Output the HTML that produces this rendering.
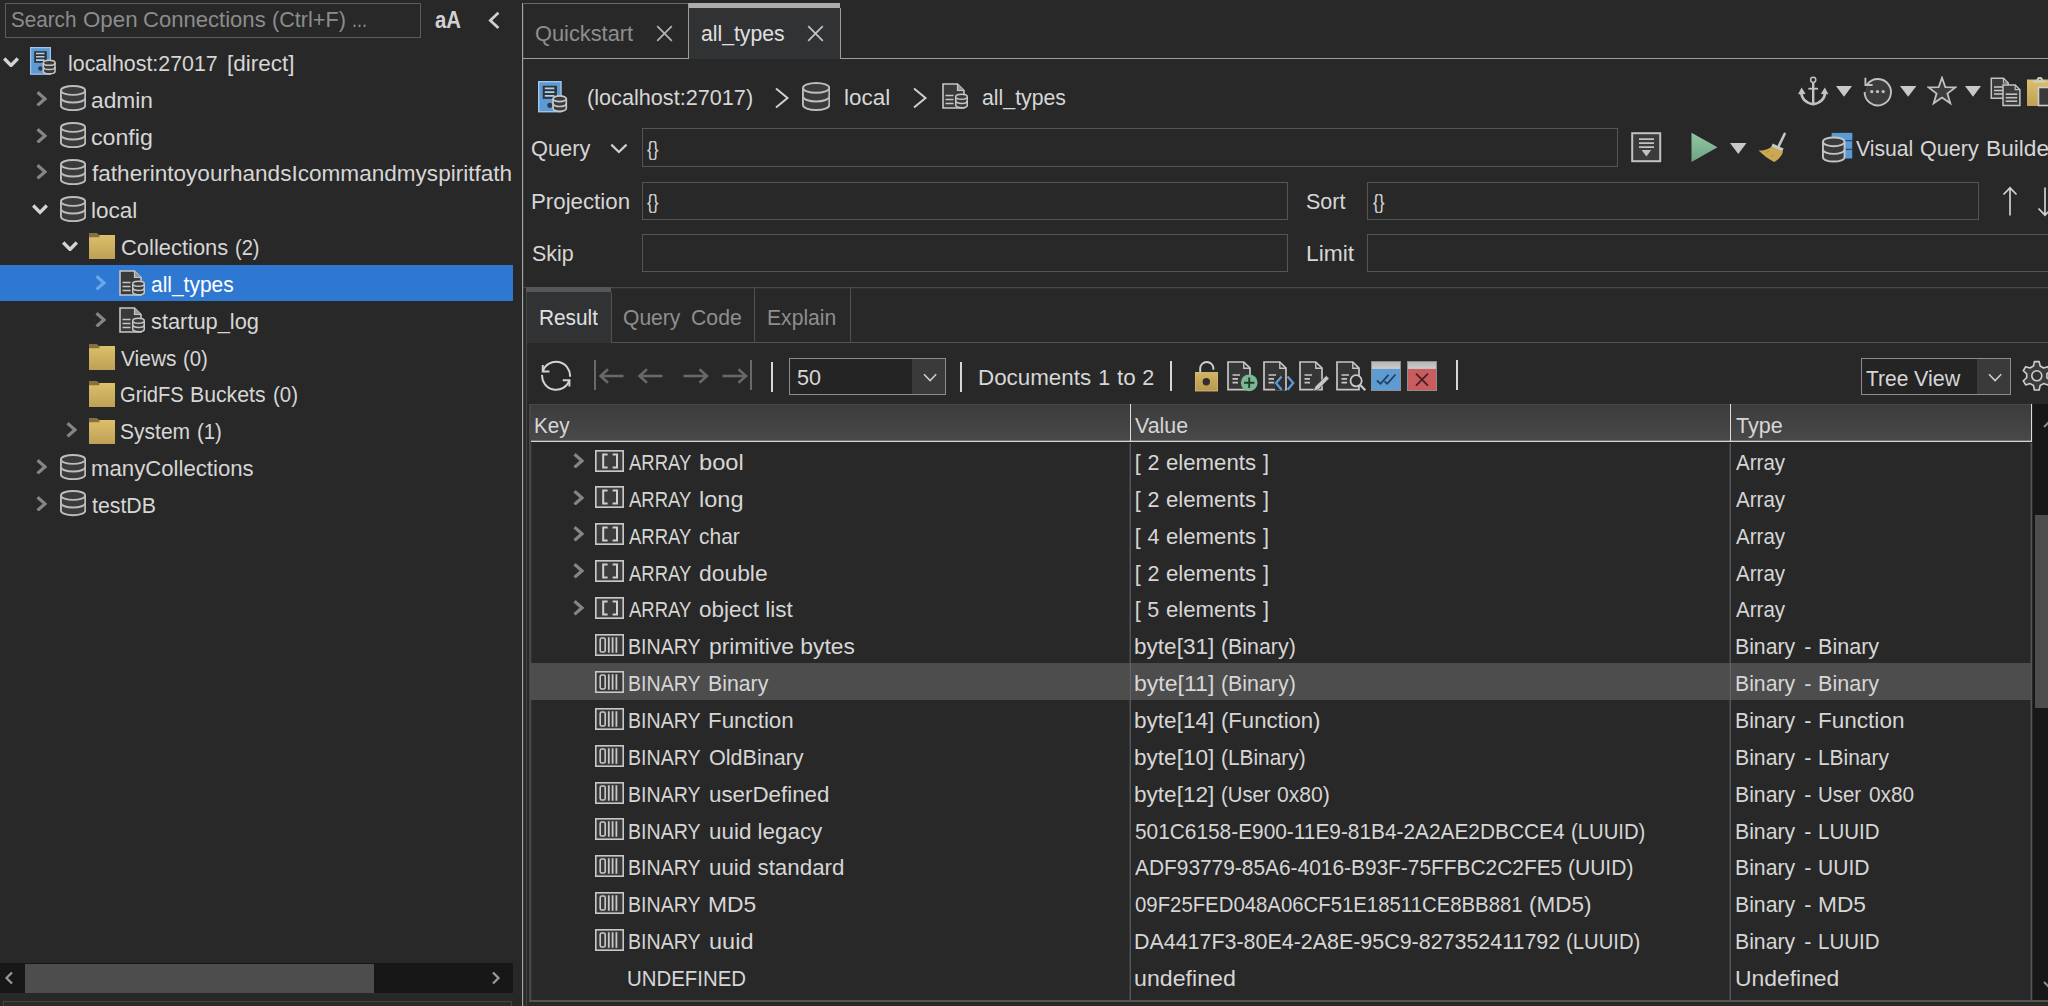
<!DOCTYPE html>
<html><head><meta charset="utf-8"><title>all_types</title>
<style>
html,body{margin:0;padding:0;background:#282828;}
body{width:2048px;height:1006px;overflow:hidden;position:relative;font-family:"Liberation Sans",sans-serif;font-size:21.5px;color:#d6d6d6;}
.a{position:absolute;box-sizing:border-box;display:block;}
.t{position:absolute;left:0;white-space:pre;line-height:28px;height:28px;}
.w{position:absolute;top:0;white-space:pre;transform-origin:0 0;}
</style></head>
<body>
<div class="a" style="left:5px;top:3px;width:416px;height:35px;border:1px solid #5c5c5c;"></div>
<svg class="a" style="left:486.5px;top:11.4px" width="14" height="19" viewBox="0 0 14 19"><path d="M11.4 1.8 L3.3 9.4 L11.4 17" fill="none" stroke="#d2d2d2" stroke-width="2.7"/></svg>
<svg class="a" style="left:3px;top:56.7px" width="16" height="10.5" viewBox="0 0 16 10.5"><path d="M1.2 1.5 L8.0 8.5 L14.8 1.5" fill="none" stroke="#d4d4d4" stroke-width="3.3"/></svg>
<svg class="a" style="left:30px;top:47.0px" width="27" height="29" viewBox="0 0 27 29"><rect x="0.6" y="0.6" width="19.8" height="26.6" fill="#5b9ad5" stroke="#a3c8ec" stroke-width="1.2"/><rect x="4.2" y="4.2" width="12.6" height="11.6" fill="#333"/><path d="M6 6.5 H14.5 M6 9.8 H14.5 M6 13.1 H14.5" stroke="#a9d1f5" stroke-width="1.6"/><circle cx="10.5" cy="21.5" r="2.3" fill="#2f3b48"/><g transform="translate(12.6 12.4)"><path d="M0.75 3.334 V11.866 A5.85 2.584 0 0 0 12.45 11.866 V3.334" fill="#3a3a3a" stroke="#c8c8c8" stroke-width="1.5"/><ellipse cx="6.6" cy="3.334" rx="5.85" ry="2.584" fill="#3a3a3a" stroke="#c8c8c8" stroke-width="1.5"/><path d="M0.75 7.6 A5.85 2.584 0 0 0 12.45 7.6" fill="none" stroke="#c8c8c8" stroke-width="1.5"/></g></svg>
<svg class="a" style="left:36px;top:90.6px" width="11" height="15.6" viewBox="0 0 11 15.6"><path d="M1.5 1.2 L9 7.8 L1.5 14.4" fill="none" stroke="#858585" stroke-width="3.2"/></svg>
<svg class="a" style="left:59.7px;top:85.2px" width="26.2" height="26.2" viewBox="0 0 26.2 26.2"><path d="M0.9499999999999993 5.404000000000001 V20.796 A12.15 4.454000000000001 0 0 0 25.25 20.796 V5.404000000000001" fill="#3b3b3b" stroke="#bdbdbd" stroke-width="1.9"/><ellipse cx="13.1" cy="5.404000000000001" rx="12.15" ry="4.454000000000001" fill="#3b3b3b" stroke="#bdbdbd" stroke-width="1.9"/><path d="M0.9499999999999993 13.100000000000001 A12.15 4.454000000000001 0 0 0 25.25 13.100000000000001" fill="none" stroke="#bdbdbd" stroke-width="1.9"/></svg>
<svg class="a" style="left:36px;top:127.5px" width="11" height="15.6" viewBox="0 0 11 15.6"><path d="M1.5 1.2 L9 7.8 L1.5 14.4" fill="none" stroke="#858585" stroke-width="3.2"/></svg>
<svg class="a" style="left:59.7px;top:122.1px" width="26.2" height="26.2" viewBox="0 0 26.2 26.2"><path d="M0.9499999999999993 5.404000000000001 V20.796 A12.15 4.454000000000001 0 0 0 25.25 20.796 V5.404000000000001" fill="#3b3b3b" stroke="#bdbdbd" stroke-width="1.9"/><ellipse cx="13.1" cy="5.404000000000001" rx="12.15" ry="4.454000000000001" fill="#3b3b3b" stroke="#bdbdbd" stroke-width="1.9"/><path d="M0.9499999999999993 13.100000000000001 A12.15 4.454000000000001 0 0 0 25.25 13.100000000000001" fill="none" stroke="#bdbdbd" stroke-width="1.9"/></svg>
<svg class="a" style="left:36px;top:164.3px" width="11" height="15.6" viewBox="0 0 11 15.6"><path d="M1.5 1.2 L9 7.8 L1.5 14.4" fill="none" stroke="#858585" stroke-width="3.2"/></svg>
<svg class="a" style="left:59.7px;top:158.9px" width="26.2" height="26.2" viewBox="0 0 26.2 26.2"><path d="M0.9499999999999993 5.404000000000001 V20.796 A12.15 4.454000000000001 0 0 0 25.25 20.796 V5.404000000000001" fill="#3b3b3b" stroke="#bdbdbd" stroke-width="1.9"/><ellipse cx="13.1" cy="5.404000000000001" rx="12.15" ry="4.454000000000001" fill="#3b3b3b" stroke="#bdbdbd" stroke-width="1.9"/><path d="M0.9499999999999993 13.100000000000001 A12.15 4.454000000000001 0 0 0 25.25 13.100000000000001" fill="none" stroke="#bdbdbd" stroke-width="1.9"/></svg>
<svg class="a" style="left:32px;top:204.0px" width="16" height="10.5" viewBox="0 0 16 10.5"><path d="M1.2 1.5 L8.0 8.5 L14.8 1.5" fill="none" stroke="#d4d4d4" stroke-width="3.3"/></svg>
<svg class="a" style="left:59.7px;top:195.7px" width="26.2" height="26.2" viewBox="0 0 26.2 26.2"><path d="M0.9499999999999993 5.404000000000001 V20.796 A12.15 4.454000000000001 0 0 0 25.25 20.796 V5.404000000000001" fill="#3b3b3b" stroke="#bdbdbd" stroke-width="1.9"/><ellipse cx="13.1" cy="5.404000000000001" rx="12.15" ry="4.454000000000001" fill="#3b3b3b" stroke="#bdbdbd" stroke-width="1.9"/><path d="M0.9499999999999993 13.100000000000001 A12.15 4.454000000000001 0 0 0 25.25 13.100000000000001" fill="none" stroke="#bdbdbd" stroke-width="1.9"/></svg>
<svg class="a" style="left:62px;top:240.8px" width="16" height="10.5" viewBox="0 0 16 10.5"><path d="M1.2 1.5 L8.0 8.5 L14.8 1.5" fill="none" stroke="#d4d4d4" stroke-width="3.3"/></svg>
<svg class="a" style="left:89px;top:233.3px" width="26" height="26" viewBox="0 0 26 26"><defs><linearGradient id="fg" x1="0" y1="0" x2="0" y2="1"><stop offset="0" stop-color="#dcc06a"/><stop offset="1" stop-color="#bea056"/></linearGradient></defs><rect x="0" y="2" width="26" height="24" fill="url(#fg)"/><path d="M0 0 H7.6 L10.4 2 V4.3 H0 Z" fill="#87703f"/></svg>
<div class="a" style="left:0px;top:264.5px;width:513px;height:36.3px;background:#2f78d2;"></div>
<svg class="a" style="left:95px;top:274.8px" width="11" height="15.6" viewBox="0 0 11 15.6"><path d="M1.5 1.2 L9 7.8 L1.5 14.4" fill="none" stroke="#6ba6ea" stroke-width="3.2"/></svg>
<svg class="a" style="left:118.5px;top:270.0px" width="27" height="27" viewBox="0 0 27 27"><path d="M1 1 H15.5 L22 7.5 V25 H1 Z" fill="#3a3a3a" stroke="#c6c6c6" stroke-width="1.6"/><path d="M15.5 1 V7.5 H22" fill="#9a9a9a" stroke="#c6c6c6" stroke-width="1.2"/><path d="M3.5 12.5 H11.5 M3.5 16.5 H11.5 M3.5 20.5 H11.5" stroke="#c6c6c6" stroke-width="1.7"/><g transform="translate(13 10.5)"><path d="M0.75 3.3000000000000003 V11.7 A5.75 2.5500000000000003 0 0 0 12.25 11.7 V3.3000000000000003" fill="#3a3a3a" stroke="#c6c6c6" stroke-width="1.5"/><ellipse cx="6.5" cy="3.3000000000000003" rx="5.75" ry="2.5500000000000003" fill="#3a3a3a" stroke="#c6c6c6" stroke-width="1.5"/><path d="M0.75 7.5 A5.75 2.5500000000000003 0 0 0 12.25 7.5" fill="none" stroke="#c6c6c6" stroke-width="1.5"/></g></svg>
<svg class="a" style="left:95px;top:311.6px" width="11" height="15.6" viewBox="0 0 11 15.6"><path d="M1.5 1.2 L9 7.8 L1.5 14.4" fill="none" stroke="#858585" stroke-width="3.2"/></svg>
<svg class="a" style="left:118.5px;top:306.8px" width="27" height="27" viewBox="0 0 27 27"><path d="M1 1 H15.5 L22 7.5 V25 H1 Z" fill="#3a3a3a" stroke="#c6c6c6" stroke-width="1.6"/><path d="M15.5 1 V7.5 H22" fill="#9a9a9a" stroke="#c6c6c6" stroke-width="1.2"/><path d="M3.5 12.5 H11.5 M3.5 16.5 H11.5 M3.5 20.5 H11.5" stroke="#c6c6c6" stroke-width="1.7"/><g transform="translate(13 10.5)"><path d="M0.75 3.3000000000000003 V11.7 A5.75 2.5500000000000003 0 0 0 12.25 11.7 V3.3000000000000003" fill="#3a3a3a" stroke="#c6c6c6" stroke-width="1.5"/><ellipse cx="6.5" cy="3.3000000000000003" rx="5.75" ry="2.5500000000000003" fill="#3a3a3a" stroke="#c6c6c6" stroke-width="1.5"/><path d="M0.75 7.5 A5.75 2.5500000000000003 0 0 0 12.25 7.5" fill="none" stroke="#c6c6c6" stroke-width="1.5"/></g></svg>
<svg class="a" style="left:89px;top:343.8px" width="26" height="26" viewBox="0 0 26 26"><defs><linearGradient id="fg" x1="0" y1="0" x2="0" y2="1"><stop offset="0" stop-color="#dcc06a"/><stop offset="1" stop-color="#bea056"/></linearGradient></defs><rect x="0" y="2" width="26" height="24" fill="url(#fg)"/><path d="M0 0 H7.6 L10.4 2 V4.3 H0 Z" fill="#87703f"/></svg>
<svg class="a" style="left:89px;top:380.7px" width="26" height="26" viewBox="0 0 26 26"><defs><linearGradient id="fg" x1="0" y1="0" x2="0" y2="1"><stop offset="0" stop-color="#dcc06a"/><stop offset="1" stop-color="#bea056"/></linearGradient></defs><rect x="0" y="2" width="26" height="24" fill="url(#fg)"/><path d="M0 0 H7.6 L10.4 2 V4.3 H0 Z" fill="#87703f"/></svg>
<svg class="a" style="left:66px;top:422.1px" width="11" height="15.6" viewBox="0 0 11 15.6"><path d="M1.5 1.2 L9 7.8 L1.5 14.4" fill="none" stroke="#858585" stroke-width="3.2"/></svg>
<svg class="a" style="left:89px;top:417.5px" width="26" height="26" viewBox="0 0 26 26"><defs><linearGradient id="fg" x1="0" y1="0" x2="0" y2="1"><stop offset="0" stop-color="#dcc06a"/><stop offset="1" stop-color="#bea056"/></linearGradient></defs><rect x="0" y="2" width="26" height="24" fill="url(#fg)"/><path d="M0 0 H7.6 L10.4 2 V4.3 H0 Z" fill="#87703f"/></svg>
<svg class="a" style="left:36px;top:458.9px" width="11" height="15.6" viewBox="0 0 11 15.6"><path d="M1.5 1.2 L9 7.8 L1.5 14.4" fill="none" stroke="#858585" stroke-width="3.2"/></svg>
<svg class="a" style="left:59.7px;top:453.5px" width="26.2" height="26.2" viewBox="0 0 26.2 26.2"><path d="M0.9499999999999993 5.404000000000001 V20.796 A12.15 4.454000000000001 0 0 0 25.25 20.796 V5.404000000000001" fill="#3b3b3b" stroke="#bdbdbd" stroke-width="1.9"/><ellipse cx="13.1" cy="5.404000000000001" rx="12.15" ry="4.454000000000001" fill="#3b3b3b" stroke="#bdbdbd" stroke-width="1.9"/><path d="M0.9499999999999993 13.100000000000001 A12.15 4.454000000000001 0 0 0 25.25 13.100000000000001" fill="none" stroke="#bdbdbd" stroke-width="1.9"/></svg>
<svg class="a" style="left:36px;top:495.8px" width="11" height="15.6" viewBox="0 0 11 15.6"><path d="M1.5 1.2 L9 7.8 L1.5 14.4" fill="none" stroke="#858585" stroke-width="3.2"/></svg>
<svg class="a" style="left:59.7px;top:490.4px" width="26.2" height="26.2" viewBox="0 0 26.2 26.2"><path d="M0.9499999999999993 5.404000000000001 V20.796 A12.15 4.454000000000001 0 0 0 25.25 20.796 V5.404000000000001" fill="#3b3b3b" stroke="#bdbdbd" stroke-width="1.9"/><ellipse cx="13.1" cy="5.404000000000001" rx="12.15" ry="4.454000000000001" fill="#3b3b3b" stroke="#bdbdbd" stroke-width="1.9"/><path d="M0.9499999999999993 13.100000000000001 A12.15 4.454000000000001 0 0 0 25.25 13.100000000000001" fill="none" stroke="#bdbdbd" stroke-width="1.9"/></svg>
<div class="a" style="left:0px;top:963px;width:513px;height:30px;background:#171717;"></div>
<div class="a" style="left:25px;top:964px;width:349px;height:29px;background:#4d4d4d;"></div>
<svg class="a" style="left:4px;top:971px" width="10" height="14" viewBox="0 0 10 14"><path d="M8 1.5 L2.5 7 L8 12.5" fill="none" stroke="#9a9a9a" stroke-width="2.2"/></svg>
<svg class="a" style="left:491px;top:971px" width="10" height="14" viewBox="0 0 10 14"><path d="M2 1.5 L7.5 7 L2 12.5" fill="none" stroke="#9a9a9a" stroke-width="2.2"/></svg>
<div class="a" style="left:3px;top:1001px;width:509px;height:6px;background:#2b2b2b;border:1px solid #444;"></div>
<div class="a" style="left:522px;top:3px;width:167px;height:1px;background:#6a6a6a;"></div>
<div class="a" style="left:522px;top:3px;width:1px;height:1003px;background:#a2a2a2;"></div>
<div class="a" style="left:523px;top:3px;width:1px;height:1003px;background:#3c3c3c;"></div>
<div class="a" style="left:522px;top:58px;width:1526px;height:1px;background:#9c9c9c;"></div>
<div class="a" style="left:688px;top:3px;width:1px;height:56px;background:#9c9c9c;"></div>
<div class="a" style="left:689px;top:3px;width:151px;height:56px;background:#313234;"></div>
<div class="a" style="left:689px;top:3px;width:151px;height:5px;background:#adadad;"></div>
<div class="a" style="left:840px;top:8px;width:1px;height:51px;background:#9c9c9c;"></div>
<svg class="a" style="left:655.8px;top:24.799999999999997px" width="17" height="17" viewBox="0 0 17 17"><path d="M1.2 1.2 L15.8 15.8 M15.8 1.2 L1.2 15.8" stroke="#b4b4b4" stroke-width="1.7"/></svg>
<svg class="a" style="left:806.8px;top:24.799999999999997px" width="17" height="17" viewBox="0 0 17 17"><path d="M1.2 1.2 L15.8 15.8 M15.8 1.2 L1.2 15.8" stroke="#c4c4c4" stroke-width="1.7"/></svg>
<svg class="a" style="left:538px;top:80.5px" width="30.51" height="32.77" viewBox="0 0 27 29"><rect x="0.6" y="0.6" width="19.8" height="26.6" fill="#5b9ad5" stroke="#a3c8ec" stroke-width="1.2"/><rect x="4.2" y="4.2" width="12.6" height="11.6" fill="#333"/><path d="M6 6.5 H14.5 M6 9.8 H14.5 M6 13.1 H14.5" stroke="#a9d1f5" stroke-width="1.6"/><circle cx="10.5" cy="21.5" r="2.3" fill="#2f3b48"/><g transform="translate(12.6 12.4)"><path d="M0.75 3.334 V11.866 A5.85 2.584 0 0 0 12.45 11.866 V3.334" fill="#3a3a3a" stroke="#c8c8c8" stroke-width="1.5"/><ellipse cx="6.6" cy="3.334" rx="5.85" ry="2.584" fill="#3a3a3a" stroke="#c8c8c8" stroke-width="1.5"/><path d="M0.75 7.6 A5.85 2.584 0 0 0 12.45 7.6" fill="none" stroke="#c8c8c8" stroke-width="1.5"/></g></svg>
<svg class="a" style="left:774px;top:87px" width="16" height="22" viewBox="0 0 16 22"><path d="M2 1.5 L13.5 11 L2 20.5" fill="none" stroke="#d0d0d0" stroke-width="2"/></svg>
<svg class="a" style="left:802px;top:82px" width="28.3" height="29" viewBox="0 0 28.3 29"><path d="M0.9499999999999993 5.880000000000001 V23.12 A13.200000000000001 4.930000000000001 0 0 0 27.35 23.12 V5.880000000000001" fill="#3b3b3b" stroke="#bdbdbd" stroke-width="1.9"/><ellipse cx="14.15" cy="5.880000000000001" rx="13.200000000000001" ry="4.930000000000001" fill="#3b3b3b" stroke="#bdbdbd" stroke-width="1.9"/><path d="M0.9499999999999993 14.500000000000002 A13.200000000000001 4.930000000000001 0 0 0 27.35 14.500000000000002" fill="none" stroke="#bdbdbd" stroke-width="1.9"/></svg>
<svg class="a" style="left:912px;top:87px" width="16" height="22" viewBox="0 0 16 22"><path d="M2 1.5 L13.5 11 L2 20.5" fill="none" stroke="#d0d0d0" stroke-width="2"/></svg>
<svg class="a" style="left:942px;top:83px" width="27" height="27" viewBox="0 0 27 27"><path d="M1 1 H15.5 L22 7.5 V25 H1 Z" fill="#3a3a3a" stroke="#c6c6c6" stroke-width="1.6"/><path d="M15.5 1 V7.5 H22" fill="#9a9a9a" stroke="#c6c6c6" stroke-width="1.2"/><path d="M3.5 12.5 H11.5 M3.5 16.5 H11.5 M3.5 20.5 H11.5" stroke="#c6c6c6" stroke-width="1.7"/><g transform="translate(13 10.5)"><path d="M0.75 3.3000000000000003 V11.7 A5.75 2.5500000000000003 0 0 0 12.25 11.7 V3.3000000000000003" fill="#3a3a3a" stroke="#c6c6c6" stroke-width="1.5"/><ellipse cx="6.5" cy="3.3000000000000003" rx="5.75" ry="2.5500000000000003" fill="#3a3a3a" stroke="#c6c6c6" stroke-width="1.5"/><path d="M0.75 7.5 A5.75 2.5500000000000003 0 0 0 12.25 7.5" fill="none" stroke="#c6c6c6" stroke-width="1.5"/></g></svg>
<svg class="a" style="left:610px;top:142.6px" width="18" height="11" viewBox="0 0 18 11"><path d="M1.3 1.6 L8.9 9 L16.5 1.6" fill="none" stroke="#cfcfcf" stroke-width="2.2"/></svg>
<div class="a" style="left:642px;top:128px;width:976px;height:38.5px;border:1px solid #555;"></div>
<div class="a" style="left:642px;top:181.5px;width:646px;height:38.5px;border:1px solid #555;"></div>
<div class="a" style="left:1367px;top:181.5px;width:612px;height:38.5px;border:1px solid #555;"></div>
<div class="a" style="left:642px;top:233.5px;width:646px;height:38.5px;border:1px solid #555;"></div>
<div class="a" style="left:1367px;top:233.5px;width:700px;height:38.5px;border:1px solid #555;"></div>
<div class="a" style="left:523px;top:287px;width:1525px;height:1px;background:#484848;"></div>
<div class="a" style="left:611px;top:288px;width:1437px;height:1px;background:#303030;"></div>
<div class="a" style="left:526px;top:287px;width:85px;height:56px;background:#303234;"></div>
<div class="a" style="left:526px;top:287px;width:85px;height:5px;background:#575757;"></div>
<div class="a" style="left:526px;top:292px;width:1px;height:714px;background:#454545;"></div>
<div class="a" style="left:611px;top:292px;width:1px;height:51px;background:#505050;"></div>
<div class="a" style="left:754px;top:287px;width:1px;height:55px;background:#505050;"></div>
<div class="a" style="left:850px;top:287px;width:1px;height:55px;background:#505050;"></div>
<div class="a" style="left:611px;top:342px;width:1437px;height:1px;background:#505050;"></div>
<svg class="a" style="left:540px;top:360px" width="33" height="33" viewBox="0 0 33 33"><path d="M2.79 11.47 A14.0 14.0 0 0 1 30.07 16.78 M29.41 20.13 A14.0 14.0 0 0 1 2.13 14.82" fill="none" stroke="#d2d2d2" stroke-width="2"/><path d="M2.79 5.07 V11.47 H9.49 M29.41 26.53 V20.13 H22.71" fill="none" stroke="#d2d2d2" stroke-width="2"/></svg>
<div class="a" style="left:594px;top:360px;width:2px;height:30px;background:#696969;"></div>
<svg class="a" style="left:597.5px;top:368px" width="26" height="16" viewBox="0 0 26 16"><path d="M25.5 8 H2.5 M10 1.2 L2.5 8 L10 14.8" fill="none" stroke="#696969" stroke-width="2.5"/></svg>
<svg class="a" style="left:636.5px;top:368px" width="26" height="16" viewBox="0 0 26 16"><path d="M25.5 8 H2.5 M10 1.2 L2.5 8 L10 14.8" fill="none" stroke="#696969" stroke-width="2.5"/></svg>
<svg class="a" style="left:682.5px;top:368px" width="26" height="16" viewBox="0 0 26 16"><path d="M0.5 8 H24 M16.5 1.2 L24 8 L16.5 14.8" fill="none" stroke="#696969" stroke-width="2.5"/></svg>
<svg class="a" style="left:722px;top:368px" width="26" height="16" viewBox="0 0 26 16"><path d="M0.5 8 H24 M16.5 1.2 L24 8 L16.5 14.8" fill="none" stroke="#696969" stroke-width="2.5"/></svg>
<div class="a" style="left:750px;top:360px;width:2px;height:30px;background:#696969;"></div>
<div class="a" style="left:771px;top:362px;width:2px;height:29.5px;background:#d6d6d6;"></div>
<div class="a" style="left:789px;top:358px;width:157px;height:37px;background:#242424;border:1px solid #8c8c8c;"></div>
<div class="a" style="left:912px;top:359px;width:33px;height:35px;background:#3a3a3a;"></div>
<svg class="a" style="left:923.4px;top:373.4px" width="15" height="10" viewBox="0 0 15 10"><path d="M1 1.3 L7.1 7.6 L13.2 1.3" fill="none" stroke="#d0d0d0" stroke-width="1.5"/></svg>
<div class="a" style="left:960px;top:362px;width:2px;height:29.5px;background:#d6d6d6;"></div>
<div class="a" style="left:1170px;top:361px;width:2px;height:30px;background:#d6d6d6;"></div>
<svg class="a" style="left:1194px;top:359.5px" width="26" height="32" viewBox="0 0 26 32"><defs><linearGradient id="lk" x1="0" y1="0" x2="0" y2="1"><stop offset="0" stop-color="#d3b463"/><stop offset="1" stop-color="#b8994b"/></linearGradient></defs><path d="M6.2 13 V8.6 A6.6 6.6 0 0 1 19.4 8.6 V9.8" fill="none" stroke="#d0d0d0" stroke-width="1.9"/><rect x="1.4" y="12.4" width="22.2" height="18.6" fill="url(#lk)" stroke="#dcc47e" stroke-width="0.8"/><circle cx="12.3" cy="21.8" r="3.7" fill="#303030"/></svg>
<svg class="a" style="left:1226.5px;top:360.6px" width="33" height="31" viewBox="0 0 33 31"><path d="M1 1 H16.8 L23 7.2 V28.6 H1 Z" fill="#363636" stroke="#c6c6c6" stroke-width="1.7"/><path d="M16.8 1 V7.2 H23" fill="none" stroke="#c6c6c6" stroke-width="1.4"/><path d="M5.5 14 H13 M5.5 17.8 H11 M5.5 21.6 H11" stroke="#c6c6c6" stroke-width="1.7"/><circle cx="22.2" cy="21.8" r="8.4" fill="#79b992"/><path d="M22.2 16.6 V27 M17 21.8 H27.4" stroke="#22392c" stroke-width="1.9"/></svg>
<svg class="a" style="left:1263.3px;top:360.6px" width="33" height="31" viewBox="0 0 33 31"><path d="M1 1 H16.8 L23 7.2 V28.6 H1 Z" fill="#363636" stroke="#c6c6c6" stroke-width="1.7"/><path d="M16.8 1 V7.2 H23" fill="none" stroke="#c6c6c6" stroke-width="1.4"/><path d="M5.5 14 H13 M5.5 17.8 H11 M5.5 21.6 H11" stroke="#c6c6c6" stroke-width="1.7"/><path d="M12 15 H22 V29.5 H12 Z" fill="#2f2f2f"/><path d="M18.6 15.4 L13 22 L18.6 28.8 M24.6 15.4 L30.2 22 L24.6 28.8" fill="none" stroke="#5e9bd3" stroke-width="2.3"/></svg>
<svg class="a" style="left:1299.3px;top:360.6px" width="33" height="31" viewBox="0 0 33 31"><path d="M1 1 H16.8 L23 7.2 V28.6 H1 Z" fill="#363636" stroke="#c6c6c6" stroke-width="1.7"/><path d="M16.8 1 V7.2 H23" fill="none" stroke="#c6c6c6" stroke-width="1.4"/><path d="M5.5 14 H13 M5.5 17.8 H11 M5.5 21.6 H11" stroke="#c6c6c6" stroke-width="1.7"/><path d="M27.2 14.6 L30.2 17.4 L19.4 28.6 L14.2 30.2 L16.2 25.4 Z" fill="#c8c8c8" stroke="#2c2c2c" stroke-width="0.6"/></svg>
<svg class="a" style="left:1335.5px;top:360.6px" width="33" height="31" viewBox="0 0 33 31"><path d="M1 1 H16.8 L23 7.2 V28.6 H1 Z" fill="#363636" stroke="#c6c6c6" stroke-width="1.7"/><path d="M16.8 1 V7.2 H23" fill="none" stroke="#c6c6c6" stroke-width="1.4"/><path d="M5.5 14 H13 M5.5 17.8 H11 M5.5 21.6 H11" stroke="#c6c6c6" stroke-width="1.7"/><circle cx="20.1" cy="19.8" r="5.6" fill="#2c2c2c" stroke="#c8c8c8" stroke-width="1.8"/><path d="M24.2 24 L29.3 29.3" stroke="#c8c8c8" stroke-width="2.3"/></svg>
<svg class="a" style="left:1371px;top:361px" width="30" height="30" viewBox="0 0 30 30"><defs><linearGradient id="tb" x1="0" y1="0" x2="0" y2="1"><stop offset="0" stop-color="#b4b4b4"/><stop offset="1" stop-color="#cdcdcd"/></linearGradient></defs><rect x="0.5" y="0.5" width="29" height="29" fill="#5e9bd3"/><rect x="0.5" y="0.5" width="29" height="7.4" fill="url(#tb)"/><rect x="0.5" y="0.5" width="29" height="29" fill="none" stroke="#8f8f8f"/><path d="M6 19.5 L9.5 22.8 L17.5 13.8 M13.5 20.4 L16.2 22.8 L24.5 13.5" fill="none" stroke="#223f60" stroke-width="1.8"/></svg>
<svg class="a" style="left:1407px;top:361px" width="30" height="30" viewBox="0 0 30 30"><rect x="0.5" y="0.5" width="29" height="29" fill="#c95c5f"/><rect x="0.5" y="0.5" width="29" height="7.4" fill="url(#tb)"/><rect x="0.5" y="0.5" width="29" height="29" fill="none" stroke="#8f8f8f"/><path d="M9 12.6 L21 24.6 M21 12.6 L9 24.6" stroke="#4a1f22" stroke-width="1.8"/></svg>
<div class="a" style="left:1456px;top:360px;width:2px;height:30px;background:#d6d6d6;"></div>
<div class="a" style="left:1861px;top:358px;width:149.5px;height:37px;background:#242424;border:1px solid #8c8c8c;"></div>
<div class="a" style="left:1977px;top:359px;width:32.5px;height:35px;background:#3a3a3a;"></div>
<svg class="a" style="left:1988px;top:372.5px" width="15" height="10" viewBox="0 0 15 10"><path d="M1 1.3 L7.1 7.6 L13.2 1.3" fill="none" stroke="#d0d0d0" stroke-width="1.5"/></svg>
<svg class="a" style="left:2021px;top:360px" width="32" height="32" viewBox="0 0 32 32"><polygon points="19.15,6.06 18.18,1.60 13.42,1.60 12.45,6.06 9.04,8.03 4.69,6.64 2.31,10.76 5.69,13.83 5.69,17.77 2.31,20.84 4.69,24.96 9.04,23.57 12.45,25.54 13.42,30.00 18.18,30.00 19.15,25.54 22.56,23.57 26.91,24.96 29.29,20.84 25.91,17.77 25.91,13.83 29.29,10.76 26.91,6.64 22.56,8.03" fill="#3c3c3c" stroke="#cfcfcf" stroke-width="1.6" stroke-linejoin="round"/><circle cx="15.8" cy="15.8" r="5" fill="#303030" stroke="#cfcfcf" stroke-width="1.6"/></svg>
<div class="a" style="left:529px;top:404px;width:1503px;height:37px;background:linear-gradient(#3c3c3c,#494949);border-top:1px solid #484848;"></div>
<div class="a" style="left:529px;top:440px;width:1503px;height:1px;background:#747474;"></div>
<div class="a" style="left:529px;top:441px;width:1503px;height:1px;background:#d4d4d4;"></div>
<div class="a" style="left:529px;top:404px;width:2px;height:597px;background:#474747;"></div>
<div class="a" style="left:531px;top:443px;width:1px;height:557px;background:#343434;"></div>
<div class="a" style="left:1130px;top:404px;width:1px;height:38px;background:#dcdcdc;"></div>
<div class="a" style="left:1129px;top:443px;width:1px;height:557px;background:#3a3c3e;"></div>
<div class="a" style="left:1130px;top:443px;width:1px;height:557px;background:#53575b;"></div>
<div class="a" style="left:1730px;top:404px;width:1px;height:38px;background:#dcdcdc;"></div>
<div class="a" style="left:1729px;top:443px;width:1px;height:557px;background:#3a3c3e;"></div>
<div class="a" style="left:1730px;top:443px;width:1px;height:557px;background:#53575b;"></div>
<div class="a" style="left:2031px;top:404px;width:1px;height:38px;background:#dcdcdc;"></div>
<div class="a" style="left:2030px;top:443px;width:1px;height:557px;background:#3a3c3e;"></div>
<div class="a" style="left:2031px;top:443px;width:1px;height:557px;background:#53575b;"></div>
<svg class="a" style="left:572.5px;top:452.7px" width="11" height="15.6" viewBox="0 0 11 15.6"><path d="M1.5 1.2 L9 7.8 L1.5 14.4" fill="none" stroke="#858585" stroke-width="3.2"/></svg>
<svg class="a" style="left:595px;top:449.5px" width="29" height="22" viewBox="0 0 29 22"><rect x="0.8" y="0.8" width="27.4" height="20.4" fill="#3c3c3c" stroke="#c8c8c8" stroke-width="1.7"/><path d="M12.6 4.6 H8.2 V17.6 H12.6 M17.6 4.6 H22 V17.6 H17.6" fill="none" stroke="#d0d0d0" stroke-width="2"/></svg>
<svg class="a" style="left:572.5px;top:489.6px" width="11" height="15.6" viewBox="0 0 11 15.6"><path d="M1.5 1.2 L9 7.8 L1.5 14.4" fill="none" stroke="#858585" stroke-width="3.2"/></svg>
<svg class="a" style="left:595px;top:486.4px" width="29" height="22" viewBox="0 0 29 22"><rect x="0.8" y="0.8" width="27.4" height="20.4" fill="#3c3c3c" stroke="#c8c8c8" stroke-width="1.7"/><path d="M12.6 4.6 H8.2 V17.6 H12.6 M17.6 4.6 H22 V17.6 H17.6" fill="none" stroke="#d0d0d0" stroke-width="2"/></svg>
<svg class="a" style="left:572.5px;top:526.4px" width="11" height="15.6" viewBox="0 0 11 15.6"><path d="M1.5 1.2 L9 7.8 L1.5 14.4" fill="none" stroke="#858585" stroke-width="3.2"/></svg>
<svg class="a" style="left:595px;top:523.2px" width="29" height="22" viewBox="0 0 29 22"><rect x="0.8" y="0.8" width="27.4" height="20.4" fill="#3c3c3c" stroke="#c8c8c8" stroke-width="1.7"/><path d="M12.6 4.6 H8.2 V17.6 H12.6 M17.6 4.6 H22 V17.6 H17.6" fill="none" stroke="#d0d0d0" stroke-width="2"/></svg>
<svg class="a" style="left:572.5px;top:563.3px" width="11" height="15.6" viewBox="0 0 11 15.6"><path d="M1.5 1.2 L9 7.8 L1.5 14.4" fill="none" stroke="#858585" stroke-width="3.2"/></svg>
<svg class="a" style="left:595px;top:560.1px" width="29" height="22" viewBox="0 0 29 22"><rect x="0.8" y="0.8" width="27.4" height="20.4" fill="#3c3c3c" stroke="#c8c8c8" stroke-width="1.7"/><path d="M12.6 4.6 H8.2 V17.6 H12.6 M17.6 4.6 H22 V17.6 H17.6" fill="none" stroke="#d0d0d0" stroke-width="2"/></svg>
<svg class="a" style="left:572.5px;top:600.1px" width="11" height="15.6" viewBox="0 0 11 15.6"><path d="M1.5 1.2 L9 7.8 L1.5 14.4" fill="none" stroke="#858585" stroke-width="3.2"/></svg>
<svg class="a" style="left:595px;top:596.9px" width="29" height="22" viewBox="0 0 29 22"><rect x="0.8" y="0.8" width="27.4" height="20.4" fill="#3c3c3c" stroke="#c8c8c8" stroke-width="1.7"/><path d="M12.6 4.6 H8.2 V17.6 H12.6 M17.6 4.6 H22 V17.6 H17.6" fill="none" stroke="#d0d0d0" stroke-width="2"/></svg>
<svg class="a" style="left:595px;top:634.1px" width="29" height="22" viewBox="0 0 29 22"><rect x="0.8" y="0.8" width="27.4" height="20.4" fill="#383838" stroke="#c8c8c8" stroke-width="1.6"/><rect x="5.2" y="4" width="5" height="14" rx="1.6" fill="none" stroke="#c8c8c8" stroke-width="1.6"/><path d="M13.8 3.2 V18.8 M17.6 3.2 V18.8 M21.4 3.2 V18.8" stroke="#c8c8c8" stroke-width="1.8"/></svg>
<div class="a" style="left:530px;top:663px;width:1501px;height:37px;background:#4d4d4d;"></div>
<svg class="a" style="left:595px;top:671.0px" width="29" height="22" viewBox="0 0 29 22"><rect x="0.8" y="0.8" width="27.4" height="20.4" fill="#383838" stroke="#c8c8c8" stroke-width="1.6"/><rect x="5.2" y="4" width="5" height="14" rx="1.6" fill="none" stroke="#c8c8c8" stroke-width="1.6"/><path d="M13.8 3.2 V18.8 M17.6 3.2 V18.8 M21.4 3.2 V18.8" stroke="#c8c8c8" stroke-width="1.8"/></svg>
<svg class="a" style="left:595px;top:707.8px" width="29" height="22" viewBox="0 0 29 22"><rect x="0.8" y="0.8" width="27.4" height="20.4" fill="#383838" stroke="#c8c8c8" stroke-width="1.6"/><rect x="5.2" y="4" width="5" height="14" rx="1.6" fill="none" stroke="#c8c8c8" stroke-width="1.6"/><path d="M13.8 3.2 V18.8 M17.6 3.2 V18.8 M21.4 3.2 V18.8" stroke="#c8c8c8" stroke-width="1.8"/></svg>
<svg class="a" style="left:595px;top:744.7px" width="29" height="22" viewBox="0 0 29 22"><rect x="0.8" y="0.8" width="27.4" height="20.4" fill="#383838" stroke="#c8c8c8" stroke-width="1.6"/><rect x="5.2" y="4" width="5" height="14" rx="1.6" fill="none" stroke="#c8c8c8" stroke-width="1.6"/><path d="M13.8 3.2 V18.8 M17.6 3.2 V18.8 M21.4 3.2 V18.8" stroke="#c8c8c8" stroke-width="1.8"/></svg>
<svg class="a" style="left:595px;top:781.5px" width="29" height="22" viewBox="0 0 29 22"><rect x="0.8" y="0.8" width="27.4" height="20.4" fill="#383838" stroke="#c8c8c8" stroke-width="1.6"/><rect x="5.2" y="4" width="5" height="14" rx="1.6" fill="none" stroke="#c8c8c8" stroke-width="1.6"/><path d="M13.8 3.2 V18.8 M17.6 3.2 V18.8 M21.4 3.2 V18.8" stroke="#c8c8c8" stroke-width="1.8"/></svg>
<svg class="a" style="left:595px;top:818.4px" width="29" height="22" viewBox="0 0 29 22"><rect x="0.8" y="0.8" width="27.4" height="20.4" fill="#383838" stroke="#c8c8c8" stroke-width="1.6"/><rect x="5.2" y="4" width="5" height="14" rx="1.6" fill="none" stroke="#c8c8c8" stroke-width="1.6"/><path d="M13.8 3.2 V18.8 M17.6 3.2 V18.8 M21.4 3.2 V18.8" stroke="#c8c8c8" stroke-width="1.8"/></svg>
<svg class="a" style="left:595px;top:855.3px" width="29" height="22" viewBox="0 0 29 22"><rect x="0.8" y="0.8" width="27.4" height="20.4" fill="#383838" stroke="#c8c8c8" stroke-width="1.6"/><rect x="5.2" y="4" width="5" height="14" rx="1.6" fill="none" stroke="#c8c8c8" stroke-width="1.6"/><path d="M13.8 3.2 V18.8 M17.6 3.2 V18.8 M21.4 3.2 V18.8" stroke="#c8c8c8" stroke-width="1.8"/></svg>
<svg class="a" style="left:595px;top:892.1px" width="29" height="22" viewBox="0 0 29 22"><rect x="0.8" y="0.8" width="27.4" height="20.4" fill="#383838" stroke="#c8c8c8" stroke-width="1.6"/><rect x="5.2" y="4" width="5" height="14" rx="1.6" fill="none" stroke="#c8c8c8" stroke-width="1.6"/><path d="M13.8 3.2 V18.8 M17.6 3.2 V18.8 M21.4 3.2 V18.8" stroke="#c8c8c8" stroke-width="1.8"/></svg>
<svg class="a" style="left:595px;top:929.0px" width="29" height="22" viewBox="0 0 29 22"><rect x="0.8" y="0.8" width="27.4" height="20.4" fill="#383838" stroke="#c8c8c8" stroke-width="1.6"/><rect x="5.2" y="4" width="5" height="14" rx="1.6" fill="none" stroke="#c8c8c8" stroke-width="1.6"/><path d="M13.8 3.2 V18.8 M17.6 3.2 V18.8 M21.4 3.2 V18.8" stroke="#c8c8c8" stroke-width="1.8"/></svg>
<div class="a" style="left:1130px;top:663px;width:1px;height:37px;background:#62666a;"></div>
<div class="a" style="left:1730px;top:663px;width:1px;height:37px;background:#62666a;"></div>
<div class="a" style="left:529px;top:1000px;width:1519px;height:2px;background:#555;"></div>
<div class="a" style="left:2033px;top:404px;width:15px;height:596px;background:#171717;"></div>
<div class="a" style="left:2035px;top:515px;width:13px;height:193px;background:#4d4d4d;"></div>
<svg class="a" style="left:2043px;top:419px" width="12" height="10" viewBox="0 0 12 10"><path d="M1 8 L7 2 L13 8" fill="none" stroke="#8a8a8a" stroke-width="2"/></svg>
<svg class="a" style="left:2043px;top:979.5px" width="12" height="10" viewBox="0 0 12 10"><path d="M1 2 L7 8 L13 2" fill="none" stroke="#8a8a8a" stroke-width="2"/></svg>
<svg class="a" style="left:1797px;top:76px" width="33" height="30" viewBox="0 0 33 30"><circle cx="16.2" cy="3.8" r="2.6" fill="none" stroke="#c2c2c2" stroke-width="1.5"/><path d="M16.2 6.5 V27.5" stroke="#c2c2c2" stroke-width="2.4"/><path d="M11.3 12.7 H21.1" stroke="#c2c2c2" stroke-width="1.8"/><path d="M4.3 16 C4.5 23 9 27 16.2 28.3 C23.4 27 27.9 23 28.1 16" fill="none" stroke="#c2c2c2" stroke-width="2.6"/><path d="M1 18.3 L4.6 11.5 L8.6 18 Z M23.8 18 L27.8 11.5 L31.4 18.3 Z" fill="#c2c2c2"/></svg>
<svg class="a" style="left:1835.6px;top:86.3px" width="16" height="10.8" viewBox="0 0 16 10.8"><path d="M0 0 H16 L8.0 10.8 Z" fill="#c8c8c8"/></svg>
<svg class="a" style="left:1862px;top:75.5px" width="32" height="32" viewBox="0 0 32 32"><path d="M5.3 8.2 A13.2 13.2 0 1 1 2.6 16" fill="#3c3c3c" stroke="#c2c2c2" stroke-width="1.9"/><path d="M3.4 1.8 V9 H10.6" fill="none" stroke="#c2c2c2" stroke-width="1.9"/><circle cx="9.8" cy="15.6" r="1.6" fill="#c2c2c2"/><circle cx="15.5" cy="15.6" r="1.6" fill="#c2c2c2"/><circle cx="21.2" cy="15.6" r="1.6" fill="#c2c2c2"/></svg>
<svg class="a" style="left:1899.8px;top:86.3px" width="16.3" height="10.8" viewBox="0 0 16.3 10.8"><path d="M0 0 H16.3 L8.15 10.8 Z" fill="#c8c8c8"/></svg>
<svg class="a" style="left:1927px;top:76px" width="30" height="30" viewBox="0 0 30 30"><polygon points="15.00,1.70 18.35,11.19 28.41,11.44 20.42,17.56 23.29,27.21 15.00,21.50 6.71,27.21 9.58,17.56 1.59,11.44 11.65,11.19" fill="#3c3c3c" stroke="#c2c2c2" stroke-width="1.8" stroke-linejoin="miter"/></svg>
<svg class="a" style="left:1964.5px;top:86.3px" width="16" height="10.8" viewBox="0 0 16 10.8"><path d="M0 0 H16 L8.0 10.8 Z" fill="#c8c8c8"/></svg>
<svg class="a" style="left:1990px;top:76.5px" width="32" height="30" viewBox="0 0 32 30"><g transform="translate(0.5 0.5)"><path d="M0.8 0.8 H13.0 L17.7 5.5 V20.7 H0.8 Z" fill="#3a3a3a" stroke="#c2c2c2" stroke-width="1.5"/><path d="M13.0 0.8 V5.5 H17.7" fill="none" stroke="#c2c2c2" stroke-width="1.2"/><path d="M3.5 9.5 H15.0" stroke="#c2c2c2" stroke-width="1.6"/><path d="M3.5 13 H15.0" stroke="#c2c2c2" stroke-width="1.6"/><path d="M3.5 16.5 H15.0" stroke="#c2c2c2" stroke-width="1.6"/></g><g transform="translate(12.2 7.2)"><path d="M0.8 0.8 H13.0 L17.7 5.5 V21.2 H0.8 Z" fill="#3a3a3a" stroke="#c2c2c2" stroke-width="1.5"/><path d="M13.0 0.8 V5.5 H17.7" fill="none" stroke="#c2c2c2" stroke-width="1.2"/><path d="M3.5 10 H15.0" stroke="#c2c2c2" stroke-width="1.6"/><path d="M3.5 13.5 H15.0" stroke="#c2c2c2" stroke-width="1.6"/><path d="M3.5 17 H15.0" stroke="#c2c2c2" stroke-width="1.6"/></g></svg>
<svg class="a" style="left:2026.5px;top:77px" width="24" height="30" viewBox="0 0 24 30"><defs><linearGradient id="pg" x1="0" y1="0" x2="0" y2="1"><stop offset="0" stop-color="#dcc06a"/><stop offset="1" stop-color="#bea056"/></linearGradient></defs><rect x="0" y="2.5" width="24" height="26.5" fill="url(#pg)"/><path d="M6 4.5 H19 M10.5 3 A2.2 2.2 0 0 1 15 3" fill="none" stroke="#cfcfcf" stroke-width="1.8"/><rect x="11.5" y="10.5" width="14" height="18" fill="#3a3a3a" stroke="#cfcfcf" stroke-width="1.6"/></svg>
<svg class="a" style="left:1630.5px;top:132px" width="31" height="31" viewBox="0 0 31 31"><rect x="1.2" y="1.2" width="28" height="28" fill="#3b3b3b" stroke="#c2c2c2" stroke-width="2"/><path d="M8 7.2 H23 M8 11.2 H23 M8 15.2 H23" stroke="#c2c2c2" stroke-width="1.8"/><path d="M10.6 18 H20.2 L15.4 24.4 Z" fill="#c2c2c2"/></svg>
<svg class="a" style="left:1691px;top:132px" width="28" height="31" viewBox="0 0 28 31"><defs><linearGradient id="rg" x1="0" y1="0" x2="0" y2="1"><stop offset="0" stop-color="#93c8a6"/><stop offset="1" stop-color="#6da382"/></linearGradient></defs><path d="M0.5 0.7 L26.5 15.3 L0.5 29.9 Z" fill="url(#rg)"/></svg>
<svg class="a" style="left:1730.4px;top:143px" width="16.5" height="11" viewBox="0 0 16.5 11"><path d="M0 0 H16.5 L8.25 11 Z" fill="#c8c8c8"/></svg>
<svg class="a" style="left:1757px;top:131px" width="31" height="32" viewBox="0 0 31 32"><path d="M27.7 2.8 L21.8 15" stroke="#c6c6c6" stroke-width="2.6" stroke-linecap="round"/><path d="M15.8 12.6 L26.6 17.6 L25 21 L14.2 16 Z" fill="#c8c8c8"/><path d="M14.6 15.4 L26 20.6 C25 25 21 29 17.2 31 C12 28.5 6 24 1.6 19.6 C7 19.6 12 18 14.6 15.4 Z" fill="#c9a952"/><path d="M9 21.5 L12.5 20 M14 25.5 L17 23.5" stroke="#a58a3f" stroke-width="0.8"/></svg>
<svg class="a" style="left:1821px;top:131.5px" width="33" height="32" viewBox="0 0 33 32"><rect x="10.6" y="0.9" width="20.6" height="6.2" fill="#5b9ad5"/><rect x="21" y="0.9" width="10.2" height="25.6" fill="#5b9ad5"/><path d="M21 8.6 H31.2 M21 17.4 H31.2" stroke="#2d4f73" stroke-width="1.4"/><g transform="translate(1 4.5)"><path d="M0.9499999999999993 5.37 V20.63 A10.8 4.42 0 0 0 22.55 20.63 V5.37" fill="#3a3a3a" stroke="#c4c4c4" stroke-width="1.9"/><ellipse cx="11.75" cy="5.37" rx="10.8" ry="4.42" fill="#3a3a3a" stroke="#c4c4c4" stroke-width="1.9"/><path d="M0.9499999999999993 13.0 A10.8 4.42 0 0 0 22.55 13.0" fill="none" stroke="#c4c4c4" stroke-width="1.9"/></g></svg>
<svg class="a" style="left:2002px;top:186px" width="16" height="31" viewBox="0 0 16 31"><path d="M8 29.5 V2 M1.5 8.5 L8 1.8 L14.5 8.5" fill="none" stroke="#cfcfcf" stroke-width="1.7"/></svg>
<svg class="a" style="left:2037px;top:186px" width="16" height="31" viewBox="0 0 16 31"><path d="M8 1.5 V29 M1.5 22.5 L8 29.2 L14.5 22.5" fill="none" stroke="#cfcfcf" stroke-width="1.7"/></svg>
<span class="t" style="top:6.4px;color:#8c8c8c;"><span class="w" style="left:10.94px;transform:scaleX(0.9601)">Search</span> <span class="w" style="left:82.55px;transform:scaleX(1.0374)">Open</span> <span class="w" style="left:143.29px;transform:scaleX(1.0264)">Connections</span> <span class="w" style="left:272.13px;transform:scaleX(1.0055)">(Ctrl+F)</span> <span class="w" style="left:351.50px;transform:scaleX(0.8339)">...</span></span>
<span class="t" style="top:5.9px;color:#d2d2d2;font-size:23.4px;font-weight:700;"><span class="w" style="left:434.53px;transform:scaleX(0.8694)">aA</span></span>
<span class="t" style="top:50.0px;"><span class="w" style="left:67.71px;transform:scaleX(0.9943)">localhost:27017</span> <span class="w" style="left:227.29px;transform:scaleX(1.0480)">[direct]</span></span>
<span class="t" style="top:86.8px;"><span class="w" style="left:91.24px;transform:scaleX(1.0574)">admin</span></span>
<span class="t" style="top:123.6px;"><span class="w" style="left:91.23px;transform:scaleX(1.0763)">config</span></span>
<span class="t" style="top:160.4px;"><span class="w" style="left:91.77px;transform:scaleX(1.0495)">fatherintoyourhandsIcommandmyspiritfath</span></span>
<span class="t" style="top:197.3px;"><span class="w" style="left:90.65px;transform:scaleX(1.0478)">local</span></span>
<span class="t" style="top:234.1px;"><span class="w" style="left:120.70px;transform:scaleX(1.0200)">Collections</span> <span class="w" style="left:235.01px;transform:scaleX(0.9345)">(2)</span></span>
<span class="t" style="top:270.9px;color:#ffffff;"><span class="w" style="left:150.78px;transform:scaleX(0.9745)">all_types</span></span>
<span class="t" style="top:307.8px;"><span class="w" style="left:150.92px;transform:scaleX(1.0153)">startup_log</span></span>
<span class="t" style="top:344.6px;"><span class="w" style="left:120.77px;transform:scaleX(0.9736)">Views</span> <span class="w" style="left:183.29px;transform:scaleX(0.9469)">(0)</span></span>
<span class="t" style="top:381.4px;"><span class="w" style="left:120.18px;transform:scaleX(0.9370)">GridFS</span> <span class="w" style="left:190.37px;transform:scaleX(0.9876)">Buckets</span> <span class="w" style="left:272.69px;transform:scaleX(0.9510)">(0)</span></span>
<span class="t" style="top:418.3px;"><span class="w" style="left:120.12px;transform:scaleX(0.9786)">System</span> <span class="w" style="left:197.29px;transform:scaleX(0.9469)">(1)</span></span>
<span class="t" style="top:455.1px;"><span class="w" style="left:90.67px;transform:scaleX(1.0315)">manyCollections</span></span>
<span class="t" style="top:491.9px;"><span class="w" style="left:91.77px;transform:scaleX(0.9909)">testDB</span></span>
<span class="t" style="top:20.2px;color:#8e8e8e;"><span class="w" style="left:534.86px;transform:scaleX(1.0137)">Quickstart</span></span>
<span class="t" style="top:20.2px;color:#e0e0e0;"><span class="w" style="left:700.98px;transform:scaleX(0.9840)">all_types</span></span>
<span class="t" style="top:84.0px;"><span class="w" style="left:586.93px;transform:scaleX(1.0071)">(localhost:27017)</span></span>
<span class="t" style="top:84.0px;"><span class="w" style="left:843.86px;transform:scaleX(1.0430)">local</span></span>
<span class="t" style="top:84.0px;"><span class="w" style="left:982.47px;transform:scaleX(0.9900)">all_types</span></span>
<span class="t" style="top:135.0px;"><span class="w" style="left:531.06px;transform:scaleX(1.0145)">Query</span></span>
<span class="t" style="top:135.1px;font-size:21px;"><span class="w" style="left:647.25px;transform:scaleX(0.8289)">{}</span></span>
<span class="t" style="top:188.0px;"><span class="w" style="left:530.81px;transform:scaleX(1.0356)">Projection</span></span>
<span class="t" style="top:188.1px;font-size:21px;"><span class="w" style="left:647.25px;transform:scaleX(0.8289)">{}</span></span>
<span class="t" style="top:188.0px;"><span class="w" style="left:1306.31px;transform:scaleX(1.0017)">Sort</span></span>
<span class="t" style="top:188.1px;font-size:21px;"><span class="w" style="left:1373.25px;transform:scaleX(0.8289)">{}</span></span>
<span class="t" style="top:240.0px;"><span class="w" style="left:531.51px;transform:scaleX(0.9973)">Skip</span></span>
<span class="t" style="top:240.0px;"><span class="w" style="left:1305.57px;transform:scaleX(1.0615)">Limit</span></span>
<span class="t" style="top:304.0px;color:#e0e0e0;"><span class="w" style="left:538.60px;transform:scaleX(0.9666)">Result</span></span>
<span class="t" style="top:304.0px;color:#8e8e8e;"><span class="w" style="left:623.49px;transform:scaleX(0.9800)">Query</span> <span class="w" style="left:690.62px;transform:scaleX(0.9870)">Code</span></span>
<span class="t" style="top:304.0px;color:#8e8e8e;"><span class="w" style="left:766.88px;transform:scaleX(0.9821)">Explain</span></span>
<span class="t" style="top:364.0px;"><span class="w" style="left:797.34px;transform:scaleX(1.0043)">50</span></span>
<span class="t" style="top:364.0px;"><span class="w" style="left:978.20px;transform:scaleX(1.0399)">Documents</span> <span class="w" style="left:1098.25px">1</span> <span class="w" style="left:1116.67px;transform:scaleX(1.0400)">to</span> <span class="w" style="left:1142.37px">2</span></span>
<span class="t" style="top:365.0px;"><span class="w" style="left:1865.58px;transform:scaleX(0.9762)">Tree</span> <span class="w" style="left:1914.37px;transform:scaleX(1.0023)">View</span></span>
<span class="t" style="top:411.5px;"><span class="w" style="left:534.21px;transform:scaleX(0.9610)">Key</span></span>
<span class="t" style="top:411.5px;"><span class="w" style="left:1135.47px;transform:scaleX(0.9941)">Value</span></span>
<span class="t" style="top:411.5px;"><span class="w" style="left:1735.87px;transform:scaleX(1.0034)">Type</span></span>
<span class="t" style="top:449.0px;"><span class="w" style="left:628.57px;transform:scaleX(0.8596)">ARRAY</span> <span class="w" style="left:698.50px;transform:scaleX(1.1006)">bool</span></span>
<span class="t" style="top:449.0px;"><span class="w" style="left:1134.80px">[</span> <span class="w" style="left:1147.42px">2</span> <span class="w" style="left:1165.85px;transform:scaleX(1.0315)">elements</span> <span class="w" style="left:1262.88px">]</span></span>
<span class="t" style="top:449.0px;"><span class="w" style="left:1736.47px;transform:scaleX(0.9552)">Array</span></span>
<span class="t" style="top:485.8px;"><span class="w" style="left:628.57px;transform:scaleX(0.8596)">ARRAY</span> <span class="w" style="left:698.50px;transform:scaleX(1.0952)">long</span></span>
<span class="t" style="top:485.8px;"><span class="w" style="left:1134.80px">[</span> <span class="w" style="left:1147.42px">2</span> <span class="w" style="left:1165.85px;transform:scaleX(1.0315)">elements</span> <span class="w" style="left:1262.88px">]</span></span>
<span class="t" style="top:485.8px;"><span class="w" style="left:1736.47px;transform:scaleX(0.9552)">Array</span></span>
<span class="t" style="top:522.7px;"><span class="w" style="left:628.57px;transform:scaleX(0.8596)">ARRAY</span> <span class="w" style="left:699.18px;transform:scaleX(0.9748)">char</span></span>
<span class="t" style="top:522.7px;"><span class="w" style="left:1134.80px">[</span> <span class="w" style="left:1147.46px">4</span> <span class="w" style="left:1165.85px;transform:scaleX(1.0315)">elements</span> <span class="w" style="left:1262.88px">]</span></span>
<span class="t" style="top:522.7px;"><span class="w" style="left:1736.47px;transform:scaleX(0.9552)">Array</span></span>
<span class="t" style="top:559.5px;"><span class="w" style="left:628.57px;transform:scaleX(0.8596)">ARRAY</span> <span class="w" style="left:699.13px;transform:scaleX(1.0630)">double</span></span>
<span class="t" style="top:559.5px;"><span class="w" style="left:1134.80px">[</span> <span class="w" style="left:1147.42px">2</span> <span class="w" style="left:1165.85px;transform:scaleX(1.0315)">elements</span> <span class="w" style="left:1262.88px">]</span></span>
<span class="t" style="top:559.5px;"><span class="w" style="left:1736.47px;transform:scaleX(0.9552)">Array</span></span>
<span class="t" style="top:596.4px;"><span class="w" style="left:628.57px;transform:scaleX(0.8596)">ARRAY</span> <span class="w" style="left:699.14px;transform:scaleX(1.0450)">object list</span></span>
<span class="t" style="top:596.4px;"><span class="w" style="left:1134.80px">[</span> <span class="w" style="left:1147.35px">5</span> <span class="w" style="left:1165.85px;transform:scaleX(1.0315)">elements</span> <span class="w" style="left:1262.88px">]</span></span>
<span class="t" style="top:596.4px;"><span class="w" style="left:1736.47px;transform:scaleX(0.9552)">Array</span></span>
<span class="t" style="top:633.3px;"><span class="w" style="left:627.77px;transform:scaleX(0.9110)">BINARY</span> <span class="w" style="left:708.54px;transform:scaleX(1.0620)">primitive bytes</span></span>
<span class="t" style="top:633.3px;"><span class="w" style="left:1134.25px;transform:scaleX(1.0501)">byte[31]</span> <span class="w" style="left:1220.64px;transform:scaleX(0.9934)">(Binary)</span></span>
<span class="t" style="top:633.3px;"><span class="w" style="left:1735.37px;transform:scaleX(0.9866)">Binary</span> <span class="w" style="left:1804.22px">-</span> <span class="w" style="left:1818.05px;transform:scaleX(1.0033)">Binary</span></span>
<span class="t" style="top:670.1px;"><span class="w" style="left:627.77px;transform:scaleX(0.9110)">BINARY</span> <span class="w" style="left:708.37px;transform:scaleX(0.9900)">Binary</span></span>
<span class="t" style="top:670.1px;"><span class="w" style="left:1134.23px;transform:scaleX(1.0726)">byte[11]</span> <span class="w" style="left:1220.64px;transform:scaleX(0.9934)">(Binary)</span></span>
<span class="t" style="top:670.1px;"><span class="w" style="left:1735.37px;transform:scaleX(0.9866)">Binary</span> <span class="w" style="left:1804.22px">-</span> <span class="w" style="left:1818.05px;transform:scaleX(1.0033)">Binary</span></span>
<span class="t" style="top:707.0px;"><span class="w" style="left:627.77px;transform:scaleX(0.9110)">BINARY</span> <span class="w" style="left:708.30px;transform:scaleX(1.0397)">Function</span></span>
<span class="t" style="top:707.0px;"><span class="w" style="left:1134.25px;transform:scaleX(1.0501)">byte[14]</span> <span class="w" style="left:1220.61px;transform:scaleX(1.0279)">(Function)</span></span>
<span class="t" style="top:707.0px;"><span class="w" style="left:1735.37px;transform:scaleX(0.9866)">Binary</span> <span class="w" style="left:1804.22px">-</span> <span class="w" style="left:1817.99px;transform:scaleX(1.0484)">Function</span></span>
<span class="t" style="top:743.8px;"><span class="w" style="left:627.77px;transform:scaleX(0.9110)">BINARY</span> <span class="w" style="left:709.07px;transform:scaleX(1.0026)">OldBinary</span></span>
<span class="t" style="top:743.8px;"><span class="w" style="left:1134.25px;transform:scaleX(1.0501)">byte[10]</span> <span class="w" style="left:1220.67px;transform:scaleX(0.9708)">(LBinary)</span></span>
<span class="t" style="top:743.8px;"><span class="w" style="left:1735.37px;transform:scaleX(0.9866)">Binary</span> <span class="w" style="left:1804.22px">-</span> <span class="w" style="left:1818.09px;transform:scaleX(0.9722)">LBinary</span></span>
<span class="t" style="top:780.7px;"><span class="w" style="left:627.77px;transform:scaleX(0.9110)">BINARY</span> <span class="w" style="left:708.60px;transform:scaleX(1.0391)">userDefined</span></span>
<span class="t" style="top:780.7px;"><span class="w" style="left:1134.25px;transform:scaleX(1.0501)">byte[12]</span> <span class="w" style="left:1220.70px;transform:scaleX(0.9428)">(User</span> <span class="w" style="left:1277.20px;transform:scaleX(0.9826)">0x80)</span></span>
<span class="t" style="top:780.7px;"><span class="w" style="left:1735.37px;transform:scaleX(0.9866)">Binary</span> <span class="w" style="left:1804.22px">-</span> <span class="w" style="left:1818.21px;transform:scaleX(0.9476)">User</span> <span class="w" style="left:1869.01px;transform:scaleX(0.9673)">0x80</span></span>
<span class="t" style="top:817.6px;"><span class="w" style="left:627.77px;transform:scaleX(0.9110)">BINARY</span> <span class="w" style="left:708.59px;transform:scaleX(1.0416)">uuid legacy</span></span>
<span class="t" style="top:817.6px;"><span class="w" style="left:1134.76px;transform:scaleX(0.9695)">501C6158-E900-11E9-81B4-2A2AE2DBCCE4</span> <span class="w" style="left:1570.80px;transform:scaleX(0.9435)">(LUUID)</span></span>
<span class="t" style="top:817.6px;"><span class="w" style="left:1735.37px;transform:scaleX(0.9866)">Binary</span> <span class="w" style="left:1804.22px">-</span> <span class="w" style="left:1818.12px;transform:scaleX(0.9532)">LUUID</span></span>
<span class="t" style="top:854.4px;"><span class="w" style="left:627.77px;transform:scaleX(0.9110)">BINARY</span> <span class="w" style="left:708.59px;transform:scaleX(1.0399)">uuid standard</span></span>
<span class="t" style="top:854.4px;"><span class="w" style="left:1135.37px;transform:scaleX(0.9714)">ADF93779-85A6-4016-B93F-75FFBC2C2FE5</span> <span class="w" style="left:1567.56px;transform:scaleX(0.9777)">(UUID)</span></span>
<span class="t" style="top:854.4px;"><span class="w" style="left:1735.37px;transform:scaleX(0.9866)">Binary</span> <span class="w" style="left:1804.22px">-</span> <span class="w" style="left:1818.17px;transform:scaleX(0.9798)">UUID</span></span>
<span class="t" style="top:891.3px;"><span class="w" style="left:627.77px;transform:scaleX(0.9110)">BINARY</span> <span class="w" style="left:708.27px;transform:scaleX(1.0636)">MD5</span></span>
<span class="t" style="top:891.3px;"><span class="w" style="left:1135.01px;transform:scaleX(0.9464)">09F25FED048A06CF51E18511CE8BB881</span> <span class="w" style="left:1528.89px;transform:scaleX(1.0459)">(MD5)</span></span>
<span class="t" style="top:891.3px;"><span class="w" style="left:1735.37px;transform:scaleX(0.9866)">Binary</span> <span class="w" style="left:1804.22px">-</span> <span class="w" style="left:1817.98px;transform:scaleX(1.0568)">MD5</span></span>
<span class="t" style="top:928.1px;"><span class="w" style="left:627.77px;transform:scaleX(0.9110)">BINARY</span> <span class="w" style="left:708.54px;transform:scaleX(1.0943)">uuid</span></span>
<span class="t" style="top:928.1px;"><span class="w" style="left:1134.06px;transform:scaleX(0.9969)">DA4417F3-80E4-2A8E-95C9-827352411792</span> <span class="w" style="left:1566.20px;transform:scaleX(0.9435)">(LUUID)</span></span>
<span class="t" style="top:928.1px;"><span class="w" style="left:1735.37px;transform:scaleX(0.9866)">Binary</span> <span class="w" style="left:1804.22px">-</span> <span class="w" style="left:1818.12px;transform:scaleX(0.9532)">LUUID</span></span>
<span class="t" style="top:965.0px;"><span class="w" style="left:627.41px;transform:scaleX(0.9497)">UNDEFINED</span></span>
<span class="t" style="top:965.0px;"><span class="w" style="left:1134.05px;transform:scaleX(1.0779)">undefined</span></span>
<span class="t" style="top:965.0px;"><span class="w" style="left:1735.07px;transform:scaleX(1.0642)">Undefined</span></span>
<span class="t" style="top:135.3px;"><span class="w" style="left:1856.17px;transform:scaleX(0.9852)">Visual</span> <span class="w" style="left:1920.37px;transform:scaleX(1.0024)">Query</span> <span class="w" style="left:1986.28px;transform:scaleX(1.0551)">Builder</span></span>
</body></html>
